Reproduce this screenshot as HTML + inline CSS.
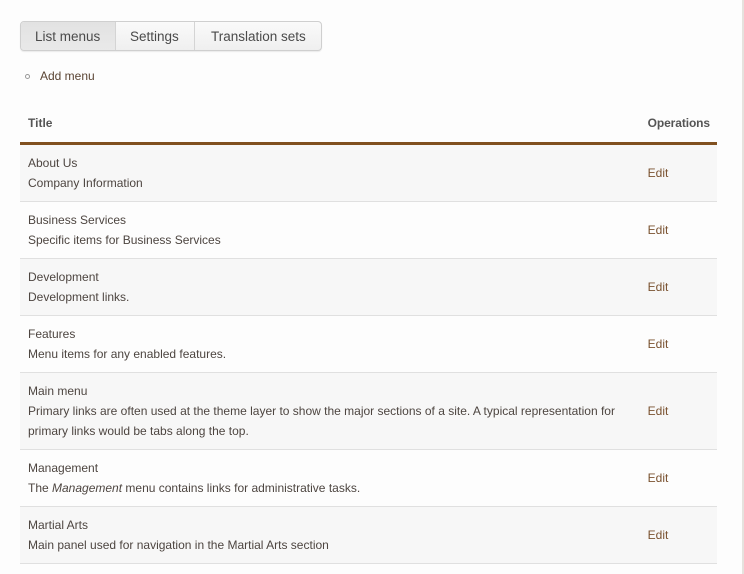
<!DOCTYPE html>
<html><head><style>
body{margin:0;width:744px;height:574px;background:#fdfdfd;font-family:"Liberation Sans",sans-serif;font-size:12px;color:#4d4540;position:relative;overflow:hidden}
.edge{position:absolute;left:742px;top:0;width:2px;height:574px;background:#e6e2de}
.tabs{position:absolute;left:20px;top:21px;height:28px;border:1px solid #cfcfcf;border-radius:4px;display:flex;background:linear-gradient(#fafafa,#efefef);box-shadow:0 1px 1px rgba(0,0,0,.08)}
.tabs div{padding:0 14px;line-height:29px;font-size:13.5px;color:#4a4a4a;border-left:1px solid #d4d4d4}
.tabs div:first-child{border-left:0;background:linear-gradient(#e2e2e2,#e9e9e9);width:66px;border-radius:3px 0 0 3px}
.tabs div:nth-child(2){width:50px}
.tabs div:nth-child(3){padding:0 15px 0 16px}
.add{position:absolute;left:40px;top:68px;line-height:16px;color:#5a4433}
.add:before{content:"";position:absolute;left:-15px;top:6px;width:3px;height:3px;border:1px solid #999;border-radius:50%}
table{position:absolute;left:20px;top:104px;width:697px;border-collapse:collapse}
th{text-align:left;font-weight:bold;font-size:12px;color:#555;height:38px;padding:0 8px;border-bottom:3px solid #80501f}
th.op{padding:0 7px 0 5px;letter-spacing:-0.1px}
td{padding:8px 8px;line-height:20px;border-bottom:1px solid #e0e0e0;vertical-align:middle;color:#4d4540}
tr:nth-child(odd) td{background:#f7f7f7}
tr:nth-child(even) td{background:#fdfdfd}
td.op{padding:0 7px 0 5px;color:#7a5230}
</style></head><body>
<div class="edge"></div>
<div class="tabs"><div>List menus</div><div>Settings</div><div>Translation sets</div></div>
<div class="add">Add menu</div>
<table>
<thead><tr><th>Title</th><th class="op">Operations</th></tr></thead>
<tbody>
<tr><td>About Us<br>Company Information</td><td class="op">Edit</td></tr>
<tr><td>Business Services<br>Specific items for Business Services</td><td class="op">Edit</td></tr>
<tr><td>Development<br>Development links.</td><td class="op">Edit</td></tr>
<tr><td>Features<br>Menu items for any enabled features.</td><td class="op">Edit</td></tr>
<tr><td>Main menu<br>Primary links are often used at the theme layer to show the major sections of a site. A typical representation for primary links would be tabs along the top.</td><td class="op">Edit</td></tr>
<tr><td>Management<br>The <i>Management</i> menu contains links for administrative tasks.</td><td class="op">Edit</td></tr>
<tr><td>Martial Arts<br>Main panel used for navigation in the Martial Arts section</td><td class="op">Edit</td></tr>
</tbody></table>
</body></html>
